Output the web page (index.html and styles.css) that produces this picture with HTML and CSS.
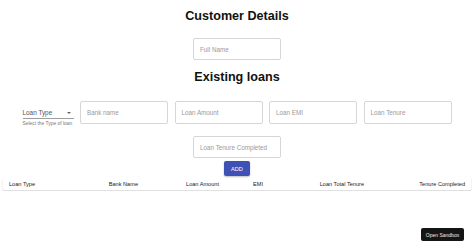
FILE: index.html
```html
<!DOCTYPE html>
<html>
<head>
<meta charset="utf-8">
<link rel="stylesheet" href="styles.css">
</head>
<body>
<div class="page">
  <h1 class="title">Customer Details</h1>
  <div class="center-row first">
    <div class="field"><span class="ph">Full Name</span></div>
  </div>
  <h2 class="title second">Existing loans</h2>
  <div class="loan-row">
    <div class="select">
      <div class="select-box">
        <span class="select-text">Loan Type</span>
        <span class="arrow"></span>
      </div>
      <div class="helper">Select the Type of loan</div>
    </div>
    <div class="field"><span class="ph">Bank name</span></div>
    <div class="field"><span class="ph">Loan Amount</span></div>
    <div class="field"><span class="ph">Loan EMI</span></div>
    <div class="field"><span class="ph">Loan Tenure</span></div>
  </div>
  <div class="center-row tenure">
    <div class="field"><span class="ph">Loan Tenure Completed</span></div>
  </div>
  <div class="center-row btn-row">
    <button class="add">ADD</button>
  </div>
  <div class="paper">
    <div class="thead">
      <span class="c c1">Loan Type</span>
      <span class="c c2">Bank Name</span>
      <span class="c c3">Loan Amount</span>
      <span class="c c4">EMI</span>
      <span class="c c5">Loan Total Tenure</span>
      <span class="c c6">Tenure Completed</span>
    </div>
  </div>
</div>
<div class="sandbox">Open Sandbox</div>
</body>
</html>
```
FILE: styles.css
```css
html, body {
  margin: 0;
  padding: 0;
  background: #fff;
  font-family: "Liberation Sans", Arial, sans-serif;
}
.page {
  padding: 0 3px;
}
.title {
  margin: 0;
  padding-top: 9px;
  font-size: 12.6px;
  line-height: 15px;
  font-weight: bold;
  text-align: center;
  color: #111;
}
.second {
  padding-top: 0;
  margin-top: 10px;
}
.center-row {
  display: flex;
  justify-content: center;
}
.first {
  margin-top: 14px;
}
.field {
  box-sizing: border-box;
  width: 88px;
  height: 22px;
  border: 1px solid #d6d6d6;
  border-radius: 2px;
  display: flex;
  align-items: center;
  padding-left: 6px;
}
.ph {
  font-size: 6.3px;
  color: #9a9a9a;
  white-space: nowrap;
}
.loan-row {
  margin-top: 16px;
  display: flex;
  justify-content: center;
  gap: 6.5px;
  height: 23px;
  align-items: flex-start;
}
.loan-row .field {
  height: 23px;
}
.select {
  width: 51px;
  padding-top: 6px;
}
.select-box {
  height: 11px;
  border-bottom: 1px solid #9e9e9e;
  display: flex;
  align-items: center;
  justify-content: space-between;
  padding-right: 3px;
}
.select-text {
  font-size: 6.4px;
  color: #555;
}
.arrow {
  width: 0;
  height: 0;
  border-left: 2px solid transparent;
  border-right: 2px solid transparent;
  border-top: 2px solid #666;
}
.helper {
  margin-top: 2px;
  font-size: 4.9px;
  color: #777;
  white-space: nowrap;
}
.tenure {
  margin-top: 12px;
}
.btn-row {
  margin-top: 3px;
}
.add {
  width: 26px;
  height: 15px;
  padding: 0;
  border: none;
  border-radius: 2px;
  background: #3f51b5;
  color: #fff;
  font-family: "Liberation Sans", Arial, sans-serif;
  font-size: 5.6px;
  box-shadow: 0 1px 2px rgba(0,0,0,0.25);
}
.paper {
  margin-top: 1px;
  box-shadow: 0 1px 1px rgba(0,0,0,0.12), 0 1px 2px rgba(0,0,0,0.14);
  border-radius: 2px;
}
.thead {
  display: flex;
  height: 13px;
  align-items: center;
  border-bottom: 1px solid #e0e0e0;
  font-size: 5.6px;
  color: #222;
}
.c {
  box-sizing: border-box;
  white-space: nowrap;
  padding: 0 6px;
}
.c1 { width: 96px; text-align: left; }
.c2 { width: 46px; text-align: right; padding: 0 7px 0 0; }
.c3 { width: 80px; text-align: right; }
.c4 { width: 44px; text-align: right; }
.c5 { width: 101px; text-align: right; }
.c6 { width: 101px; text-align: right; }
.sandbox {
  position: fixed;
  right: 10px;
  bottom: 7px;
  width: 43px;
  height: 13px;
  background: #151515;
  color: #eee;
  border-radius: 2px;
  font-size: 5px;
  display: flex;
  align-items: center;
  justify-content: center;
  white-space: nowrap;
}
```
